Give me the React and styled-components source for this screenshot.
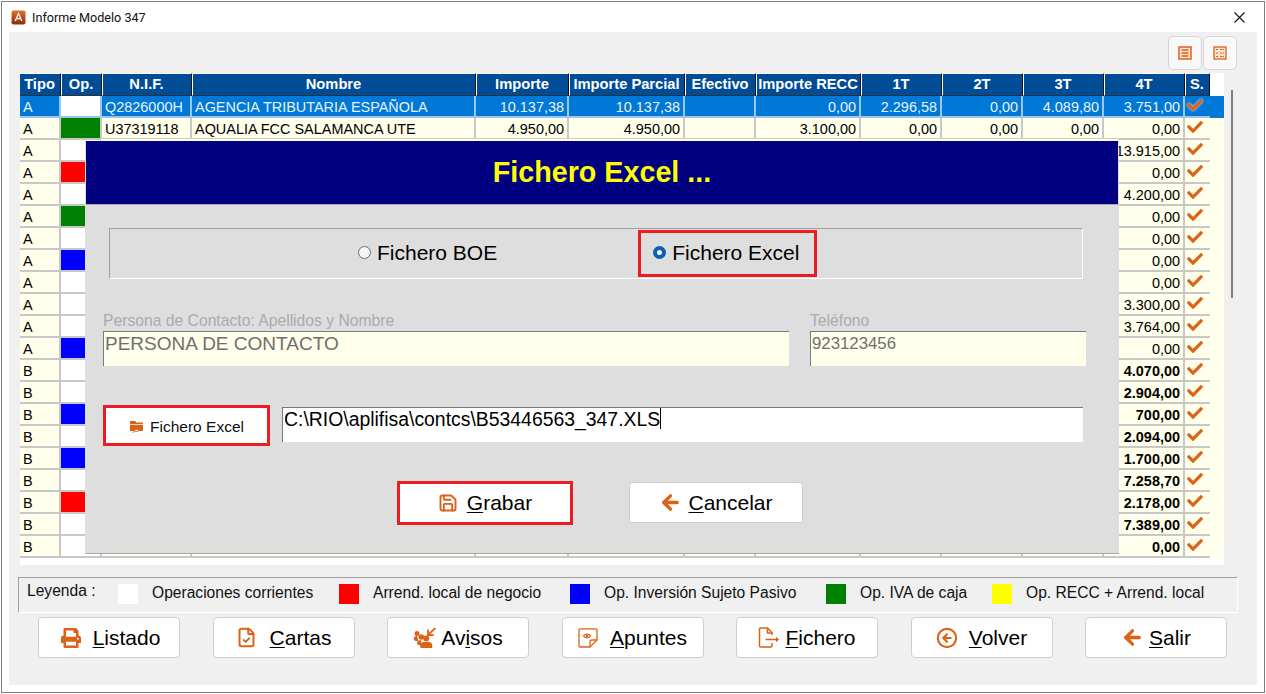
import React from "react";
import styled, { createGlobalStyle } from "styled-components";
import { FaPrint, FaCheck } from "react-icons/fa";
import { FileCheck, CircleArrowLeft, ArrowLeft, Save } from "lucide-react";

const ORANGE = "#dc6218";

const GlobalStyle = createGlobalStyle`
	html, body {
		margin: 0;
		padding: 0;
		background: #fff;
		font-family: "Liberation Sans", Arial, sans-serif;
		overflow: hidden;
	}
	* {
		box-sizing: border-box;
	}
`;

const Win = styled.div`
	position: relative;
	width: 1264px;
	height: 692px;
	margin: 1px 0 0 1px;
	border: 1px solid #7f7f7f;
	background: #fff;
	display: flex;
	flex-direction: column;
`;

const TitleBar = styled.div`
	height: 30px;
	flex: none;
	display: flex;
	align-items: center;
	padding: 0 19px 0 9px;
	font-family: Roboto, sans-serif;
	font-size: 12.6px;
	color: #111;
`;

const TitleText = styled.span`
	margin-left: 6px;
	flex: 1;
`;

const Panel = styled.div`
	height: 653px;
	margin: 0 7px 0 7px;
	background: #f0f0f0;
	padding: 4px 0 0 9px;
	display: flex;
	flex-direction: column;
`;

const Toolbar = styled.div`
	height: 34px;
	flex: none;
	display: flex;
	justify-content: flex-end;
	gap: 1px;
	padding-right: 20px;
`;

const ToolButton = styled.div`
	width: 34px;
	height: 34px;
	background: #f8f8f8;
	border: 1px solid #d6d6d6;
	border-radius: 5px;
	display: flex;
	align-items: center;
	justify-content: center;
`;

const TableRow = styled.div`
	display: flex;
	margin: 3px 0 0 2px;
	flex: none;
`;

const GridArea = styled.div`
	width: 1204px;
	height: 492px;
	background: #fff;
`;

const ScrollThumb = styled.div`
	width: 2px;
	height: 208px;
	margin: 17px 0 0 7px;
	background: #808080;
`;

const COLUMNS = "41px 41px 90px 284px 93px 116px 71px 105px 81px 81px 81px 81px 25px";

const HeadRow = styled.div`
	display: grid;
	grid-template-columns: ${COLUMNS};
	height: 23px;
`;

const HeadCell = styled.div`
	background: #004c97;
	color: #fff;
	font-weight: bold;
	font-size: 14.7px;
	line-height: 21px;
	text-align: center;
	white-space: nowrap;
	overflow: hidden;
	padding-right: 1px;
	border-right: 1px solid #101010;
	border-left: 1px solid #fff;
	border-bottom: 1px solid #303030;
	border-top: 1px solid #fff;
	&:first-child {
		border-left: none;
	}
`;

const DataRow = styled.div`
	display: grid;
	grid-template-columns: ${COLUMNS};
	height: 22px;
	background: ${(p) => (p.$selected ? "#0078d7" : "#ffffeb")};
	color: ${(p) => (p.$selected ? "#e8f2fb" : "#000")};
`;

const Cell = styled.div`
	font-size: 14.45px;
	line-height: 23px;
	padding: 0 3px;
	text-align: ${(p) => (p.$right ? "right" : "left")};
	font-weight: ${(p) => (p.$bold ? "bold" : "normal")};
	white-space: nowrap;
	overflow: hidden;
	background: ${(p) => p.$fill || "transparent"};
	border-right: 2px solid ${(p) => (p.$selected ? "#9cc6e8" : "#c8c8c8")};
	border-bottom: 2px solid ${(p) => (p.$selected ? "#9cc6e8" : "#c8c8c8")};
`;

const CheckCell = styled(Cell)`
	display: flex;
	justify-content: center;
	align-items: flex-start;
	padding: 1px 5px 0 0;
	color: ${ORANGE};
	border-right: none;
	svg {
		filter: ${(p) => (p.$selected ? "drop-shadow(0 0 1px #fff)" : "none")};
	}
`;

const Modal = styled.div`
	position: absolute;
	left: 83px;
	top: 139px;
	width: 1034px;
	height: 413px;
	background: #dedede;
	border-left: 1px solid #dedede;
	border-bottom: 1px solid #a8a8a8;
	&::before {
		content: "";
		position: absolute;
		top: -2px;
		left: 15px;
		right: 0;
		height: 2px;
		background: #ffffeb;
	}
`;

const ModalHead = styled.div`
	height: 64px;
	background: #000080;
	border-bottom: 1px solid #a8a8a8;
	color: #ffff00;
	font-weight: bold;
	font-size: 28.7px;
	display: flex;
	align-items: center;
	justify-content: center;
	margin-right: 1px;
`;

const ModalBody = styled.div`
	padding: 23px 0 0 17px;
`;

const RadioGroup = styled.div`
	width: 974px;
	height: 51px;
	margin-left: 6px;
	padding-left: 248px;
	border: 1px solid #a0a0a0;
	border-right-color: #fff;
	border-bottom-color: #fff;
	display: flex;
	align-items: center;
`;

const RadioItem = styled.div`
	display: flex;
	align-items: center;
	gap: 6px;
	font-size: 21px;
	color: #000;
	height: 47px;
	padding-bottom: 2px;
	${(p) =>
		p.$marked &&
		`
		width: 179px;
		margin-left: 141px;
		padding-left: 12px;
		border: 3px solid #ed1c24;
	`}
`;

const RadioDot = styled.span`
	width: 13px;
	height: 13px;
	flex: none;
	border-radius: 50%;
	background: ${(p) => (p.$on ? "#fff" : "#f4f4f4")};
	border: ${(p) => (p.$on ? "4px solid #0a5fb4" : "1px solid #6e6e6e")};
`;

const FieldRow = styled.div`
	display: flex;
	gap: 21px;
	margin-top: 32px;
`;

const Field = styled.div`
	width: ${(p) => p.$w}px;
`;

const FieldLabel = styled.div`
	height: 20px;
	line-height: 19px;
	font-size: 15.7px;
	color: #ababab;
	white-space: nowrap;
`;

const TextBox = styled.div`
	height: 35px;
	background: ${(p) => p.$bg || "#ffffeb"};
	border-left: 1px solid #7a7a7a;
	border-top: 1px solid #7a7a7a;
	padding: ${(p) => p.$top || 0}px 0 0 1px;
	font-size: ${(p) => p.$size}px;
	line-height: 22px;
	color: ${(p) => p.$color || "#000"};
	white-space: nowrap;
`;

const Caret = styled.span`
	display: inline-block;
	width: 1px;
	height: 21px;
	vertical-align: top;
	background: #000;
`;

const FileRow = styled.div`
	display: flex;
	align-items: flex-start;
	margin-top: 39px;
`;

const FileButton = styled.div`
	width: 167px;
	height: 41px;
	background: #fff;
	border: 3px solid #ed1c24;
	padding-top: 2px;
	display: flex;
	align-items: center;
	justify-content: center;
	gap: 6px;
	font-size: 15.5px;
	color: #111;
`;

const FileInput = styled(TextBox)`
	width: 801px;
	margin: 2px 0 0 12px;
`;

const ActionRow = styled.div`
	display: flex;
	align-items: flex-start;
	gap: 56px;
	margin: 35px 0 0 294px;
`;

const Button = styled.div`
	width: ${(p) => p.$w || 142}px;
	height: ${(p) => p.$h || 41}px;
	margin-top: ${(p) => p.$top || 0}px;
	padding-left: ${(p) => p.$pl || 0}px;
	background: #fff;
	border: ${(p) => (p.$marked ? "3px solid #ed1c24" : "1px solid #cfcfcf")};
	border-radius: ${(p) => (p.$marked ? "0" : "4px")};
	display: flex;
	align-items: center;
	justify-content: center;
	gap: ${(p) => p.$gap ?? 8}px;
	font-size: 21px;
	color: #000;
	white-space: nowrap;
	u {
		text-underline-offset: 2px;
		text-decoration-thickness: 1px;
	}
`;

const Legend = styled.div`
	width: 1220px;
	height: 36px;
	margin-top: 12px;
	flex: none;
	padding-left: 8px;
	border: 1px solid #a0a0a0;
	border-right-color: #fff;
	border-bottom-color: #fff;
	display: grid;
	grid-template-columns: 91px 221px 231px 256px 166px 1fr;
	align-items: center;
	font-size: 15.6px;
	color: #111;
`;

const LegendTitle = styled.span`
	margin-top: -8px;
`;

const LegendItem = styled.div`
	display: flex;
	align-items: center;
	gap: 14px;
	white-space: nowrap;
	padding-bottom: 2px;
`;

const LegendLabel = styled.span`
	margin-top: -2px;
`;

const Swatch = styled.span`
	width: 20px;
	height: 20px;
	flex: none;
	background: ${(p) => p.$color};
`;

const Footer = styled.div`
	display: flex;
	justify-content: space-between;
	margin: 4px 30px 0 20px;
`;

const rows = [
	{ tipo: "A", nif: "Q2826000H", name: "AGENCIA TRIBUTARIA ESPAÑOLA", imp: "10.137,38", par: "10.137,38", recc: "0,00", t1: "2.296,58", t2: "0,00", t3: "4.089,80", t4: "3.751,00", selected: true },
	{ tipo: "A", op: "#008000", nif: "U37319118", name: "AQUALIA FCC SALAMANCA UTE", imp: "4.950,00", par: "4.950,00", recc: "3.100,00", t1: "0,00", t2: "0,00", t3: "0,00", t4: "0,00" },
	{ tipo: "A", t4: "13.915,00" },
	{ tipo: "A", op: "#ff0000", t4: "0,00" },
	{ tipo: "A", t4: "4.200,00" },
	{ tipo: "A", op: "#008000", t4: "0,00" },
	{ tipo: "A", t4: "0,00" },
	{ tipo: "A", op: "#0000ff", t4: "0,00" },
	{ tipo: "A", t4: "0,00" },
	{ tipo: "A", t4: "3.300,00" },
	{ tipo: "A", t4: "3.764,00" },
	{ tipo: "A", op: "#0000ff", t4: "0,00" },
	{ tipo: "B", t4: "4.070,00", bold: true },
	{ tipo: "B", t4: "2.904,00", bold: true },
	{ tipo: "B", op: "#0000ff", t4: "700,00", bold: true },
	{ tipo: "B", t4: "2.094,00", bold: true },
	{ tipo: "B", op: "#0000ff", t4: "1.700,00", bold: true },
	{ tipo: "B", t4: "7.258,70", bold: true },
	{ tipo: "B", op: "#ff0000", t4: "2.178,00", bold: true },
	{ tipo: "B", t4: "7.389,00", bold: true },
	{ tipo: "B", t4: "0,00", bold: true },
];

const heads = ["Tipo", "Op.", "N.I.F.", "Nombre", "Importe", "Importe Parcial", "Efectivo", "Importe RECC", "1T", "2T", "3T", "4T", "S."];

const legend = [
	["#ffffff", "Operaciones corrientes"],
	["#ff0000", "Arrend. local de negocio"],
	["#0000ff", "Op. Inversión Sujeto Pasivo"],
	["#008000", "Op. IVA de caja"],
	["#ffff00", "Op. RECC + Arrend. local"],
];

function AppIcon() {
	return (
		<svg width="15" height="15" viewBox="0 0 15 15">
			<defs>
				<linearGradient id="appg" x1="0" y1="0" x2="0" y2="1">
					<stop offset="0" stopColor="#e8702a" />
					<stop offset="1" stopColor="#8a2c0c" />
				</linearGradient>
			</defs>
			<rect x="0.5" y="0.5" width="14" height="14" rx="2" fill="url(#appg)" />
			<path d="M4.2 11 7.5 3.6 10.8 11M5.4 8.6h4.2" fill="none" stroke="#fff" strokeWidth="1.3" />
		</svg>
	);
}

function CloseIcon() {
	return (
		<svg width="11" height="11" viewBox="0 0 11 11">
			<path d="M.5.5l10 10M10.5.5l-10 10" stroke="#111" strokeWidth="1.1" fill="none" />
		</svg>
	);
}

function ListIcon() {
	return (
		<svg width="14" height="14" viewBox="0 0 14 14" fill="#fbe3d4" stroke={ORANGE} strokeWidth="1.5">
			<rect x="1" y="1" width="12" height="12" />
			<path d="M3.500 4h7M3.500 7h7M3.500 10h7" fill="none" strokeWidth="1.3" />
		</svg>
	);
}

function DetailIcon() {
	return (
		<svg width="14" height="14" viewBox="0 0 14 14" fill="#fbe3d4" stroke={ORANGE} strokeWidth="1.3">
			<rect x="1" y="1" width="12" height="12" />
			<path d="M3 3.500h2.200M3 7h2.200M3 10.500h2.200M7 3.500h4M7 7h4M7 10.500h4" fill="none" strokeWidth="1.200" strokeDasharray="2 .6" />
		</svg>
	);
}

function AvisosIcon() {
	return (
		<svg width="24" height="22" viewBox="0 0 24 22" fill={ORANGE}>
			<circle cx="4" cy="6.500" r="2.500" />
			<circle cx="8.300" cy="10" r="2.800" />
			<circle cx="13.300" cy="11.500" r="3" />
			<path d="M.800 11.500c0-1.500 1.200-2.500 2.500-2.500h.7l1.500 5H3c-1.300 0-2.200-1.200-2.200-2.500z" />
			<path d="M4 16c0-1.800 1.300-2.800 3-2.800h1l.5 5H6.500C5 18.200 4 17.400 4 16z" />
			<path d="M8 21c-.4 0-.7-.3-.7-.7v-1.800c0-2 1.500-3.500 3.500-3.500h5c2 0 3.500 1.500 3.500 3.500v1.800c0 .4-.3.700-.7.700z" />
			<path d="M22.500.800 15 8M15 2.500V8h5.500" fill="none" stroke={ORANGE} strokeWidth="1.800" />
		</svg>
	);
}

function ApuntesIcon() {
	return (
		<svg width="20" height="20" viewBox="0 0 20 20" fill="none" stroke={ORANGE} strokeWidth="1.3">
			<path d="M2 .8h16a1 1 0 0 1 1 1V12l-7 7H2a1 1 0 0 1-1-1V1.800a1 1 0 0 1 1-1z" />
			<path d="M12 19v-5a2 2 0 0 1 2-2h5" />
			<path d="M5.500 8c1.500-2.400 5.500-2.400 7 0-1.500 2.400-5.500 2.400-7 0z" />
			<circle cx="9" cy="8" r="1.300" fill={ORANGE} stroke="none" />
		</svg>
	);
}

function ExportIcon() {
	return (
		<svg width="21" height="21" viewBox="0 0 21 21" fill="none" stroke={ORANGE} strokeWidth="1.500">
			<path d="M14 8V5.500L9.500 1H2.500a1 1 0 0 0-1 1v17a1 1 0 0 0 1 1H13a1 1 0 0 0 1-1v-3" />
			<path d="M9.500 1v5H14" />
			<path d="M7.500 12.500h12" />
			<path d="M18.500 10.500v4l2-2z" fill={ORANGE} strokeWidth="1" />
		</svg>
	);
}

function FolderIcon() {
	return (
		<svg width="15" height="14" viewBox="0 0 15 14">
			<path d="M1 1h5l1.500 1.500H14V4H1z" fill={ORANGE} />
			<path d="M1 4.800h13V11h-3.500a4 4 0 0 0-6 0H1z" fill={ORANGE} />
			<circle cx="7.500" cy="9" r="2.600" fill="none" stroke={ORANGE} strokeWidth="1" />
			<path d="M5.500 11 3.800 13" stroke={ORANGE} strokeWidth="1" />
		</svg>
	);
}

const iconProps = { color: ORANGE, strokeWidth: 2.3 };

export default function App() {
	return (
		<>
			<GlobalStyle />
			<Win>
				<TitleBar>
					<AppIcon />
					<TitleText>Informe Modelo 347</TitleText>
					<CloseIcon />
				</TitleBar>
				<Panel>
					<Toolbar>
						<ToolButton>
							<ListIcon />
						</ToolButton>
						<ToolButton>
							<DetailIcon />
						</ToolButton>
					</Toolbar>
					<TableRow>
						<GridArea>
							<HeadRow>
								{heads.map((h) => (
									<HeadCell key={h}>{h}</HeadCell>
								))}
							</HeadRow>
							{rows.map((r, i) => (
								<DataRow key={i} $selected={r.selected}>
									<Cell $selected={r.selected}>{r.tipo}</Cell>
									<Cell $fill={r.op || "#fff"} $selected={r.selected} />
									<Cell $selected={r.selected}>{r.nif}</Cell>
									<Cell $selected={r.selected}>{r.name}</Cell>
									<Cell $right $selected={r.selected}>{r.imp}</Cell>
									<Cell $right $selected={r.selected}>{r.par}</Cell>
									<Cell $right $selected={r.selected} />
									<Cell $right $selected={r.selected}>{r.recc}</Cell>
									<Cell $right $selected={r.selected}>{r.t1}</Cell>
									<Cell $right $selected={r.selected}>{r.t2}</Cell>
									<Cell $right $selected={r.selected}>{r.t3}</Cell>
									<Cell $right $bold={r.bold} $selected={r.selected}>{r.t4}</Cell>
									<CheckCell $selected={r.selected}>
										<FaCheck size={16} />
									</CheckCell>
								</DataRow>
							))}
						</GridArea>
						<ScrollThumb />
					</TableRow>
					<Legend>
						<LegendTitle>Leyenda :</LegendTitle>
						{legend.map(([color, label]) => (
							<LegendItem key={label}>
								<Swatch $color={color} />
								<LegendLabel>{label}</LegendLabel>
							</LegendItem>
						))}
					</Legend>
					<Footer>
						<Button $gap={12} $pl={3}>
							<FaPrint size={20} color={ORANGE} />
							<span><u>L</u>istado</span>
						</Button>
						<Button $gap={13}>
							<FileCheck size={21} {...iconProps} />
							<span><u>C</u>artas</span>
						</Button>
						<Button $gap={4}>
							<AvisosIcon />
							<span>Av<u>i</u>sos</span>
						</Button>
						<Button $gap={12}>
							<ApuntesIcon />
							<span><u>A</u>puntes</span>
						</Button>
						<Button $gap={6}>
							<ExportIcon />
							<span><u>F</u>ichero</span>
						</Button>
						<Button $gap={11}>
							<CircleArrowLeft size={22} {...iconProps} />
							<span><u>V</u>olver</span>
						</Button>
						<Button $gap={5}>
							<ArrowLeft size={23} color={ORANGE} strokeWidth={3.4} />
							<span><u>S</u>alir</span>
						</Button>
					</Footer>
				</Panel>
				<Modal>
					<ModalHead>Fichero Excel ...</ModalHead>
					<ModalBody>
						<RadioGroup>
							<RadioItem>
								<RadioDot />
								Fichero BOE
							</RadioItem>
							<RadioItem $marked>
								<RadioDot $on />
								Fichero Excel
							</RadioItem>
						</RadioGroup>
						<FieldRow>
							<Field $w={686}>
								<FieldLabel>Persona de Contacto: Apellidos y Nombre</FieldLabel>
								<TextBox $size={19} $color="#6f6f6f" $top={1}>PERSONA DE CONTACTO</TextBox>
							</Field>
							<Field $w={276}>
								<FieldLabel>Teléfono</FieldLabel>
								<TextBox $size={16.8} $color="#6f6f6f" $top={1}>923123456</TextBox>
							</Field>
						</FieldRow>
						<FileRow>
							<FileButton>
								<FolderIcon />
								Fichero Excel
							</FileButton>
							<FileInput $size={19.4} $bg="#fff">
								C:\RIO\aplifisa\contcs\B53446563_347.XLS
								<Caret />
							</FileInput>
						</FileRow>
						<ActionRow>
							<Button $marked $w={176} $h={44} $gap={9}>
								<Save size={20} {...iconProps} />
								<span><u>G</u>rabar</span>
							</Button>
							<Button $w={174} $top={1} $gap={6}>
								<ArrowLeft size={23} color={ORANGE} strokeWidth={3.4} />
								<span><u>C</u>ancelar</span>
							</Button>
						</ActionRow>
					</ModalBody>
				</Modal>
			</Win>
		</>
	);
}
